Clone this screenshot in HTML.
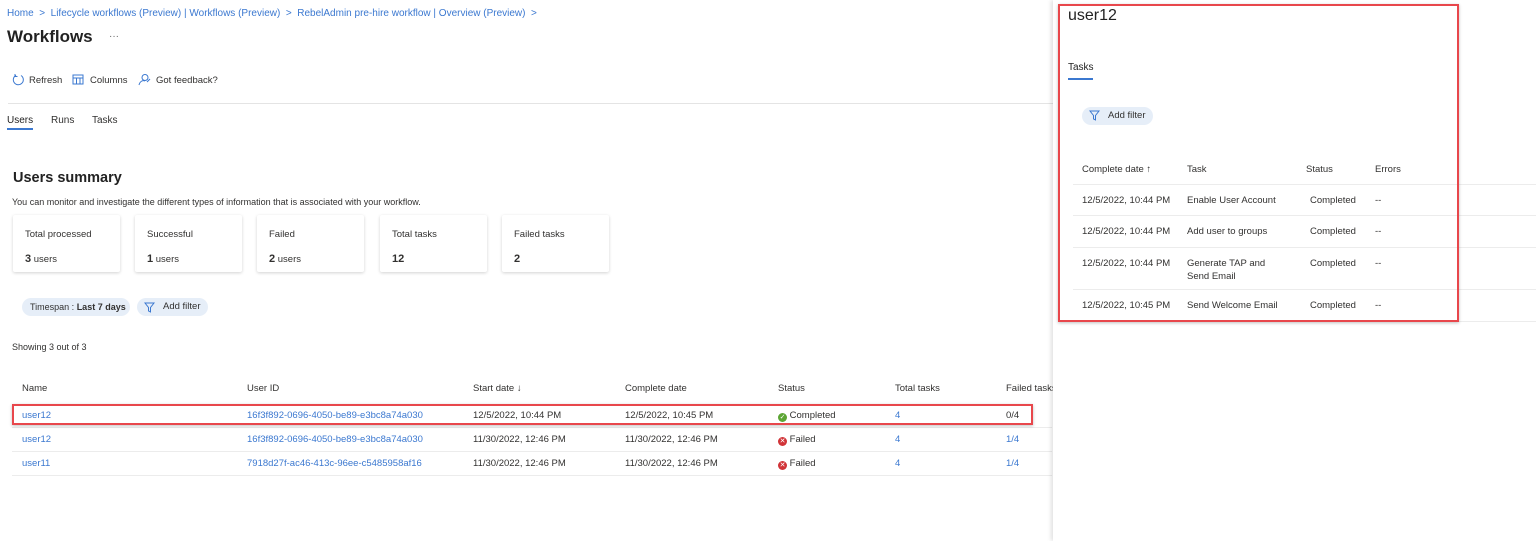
<!DOCTYPE html>
<html><head><style>
*{margin:0;padding:0;box-sizing:border-box}
body{width:1536px;height:541px;background:#fff;font-family:"Liberation Sans",sans-serif;color:#323130;position:relative;overflow:hidden;font-size:9.5px}
.a{position:absolute;white-space:nowrap}
.l{color:#3b78d0}
.card{position:absolute;top:215px;width:107px;height:57px;background:#fff;box-shadow:0 1px 3px rgba(0,0,0,.18);border-radius:2px}
.card .t{position:absolute;left:12px;top:14px;font-size:9.5px}
.card .v{position:absolute;left:12px;top:38px;font-size:9.5px}
.card .v b{font-size:11px}
.pill{position:absolute;height:18px;border-radius:9px;background:#e6eef8;font-size:9.5px;line-height:18px}
.hl{position:absolute;height:1px;background:#ececec}
</style></head><body>
<div class="a l" style="left:7px;top:8px;font-size:10px">Home &nbsp;&gt;&nbsp; Lifecycle workflows (Preview) | Workflows (Preview) &nbsp;&gt;&nbsp; RebelAdmin pre-hire workflow | Overview (Preview) &nbsp;&gt;</div>
<div class="a" style="left:7px;top:27px;font-size:17px;font-weight:bold;color:#222">Workflows</div>
<div class="a" style="left:109px;top:31px;font-size:10px;color:#666">···</div>
<svg class="a" style="left:12px;top:73px" width="13" height="13" viewBox="0 0 13 13"><path d="M9 2.5A5 5 0 1 1 4 2.3" fill="none" stroke="#3b78d0" stroke-width="1"/><path d="M3 1v2.5h2.5" fill="none" stroke="#3b78d0"/></svg>
<div class="a" style="left:29px;top:75px;font-size:9.5px">Refresh</div>
<svg class="a" style="left:72px;top:74px" width="13" height="12"><rect x="1" y="1" width="10" height="9" fill="none" stroke="#3b78d0"/><path d="M1 4h10M4.5 4v6M8 4v6" stroke="#3b78d0"/></svg>
<div class="a" style="left:90px;top:75px">Columns</div>
<svg class="a" style="left:138px;top:73px" width="13" height="13"><circle cx="7" cy="4.5" r="3" fill="none" stroke="#3b78d0"/><path d="M1 12c1-4 4-5 6-4M9 9l3-3" fill="none" stroke="#3b78d0"/></svg>
<div class="a" style="left:156px;top:75px">Got feedback?</div>
<div class="hl" style="left:8px;top:103px;width:1045px;background:#e4e4e4"></div>
<div class="a" style="left:7px;top:115px;font-size:10px;color:#222">Users</div>
<div class="a" style="left:7px;top:128px;width:26px;height:2px;background:#3b78d0"></div>
<div class="a" style="left:51px;top:115px;font-size:10px">Runs</div>
<div class="a" style="left:92px;top:115px;font-size:10px">Tasks</div>
<div class="a" style="left:13px;top:170px;font-size:14.5px;font-weight:bold;color:#222">Users summary</div>
<div class="a" style="left:12px;top:197px;font-size:9px">You can monitor and investigate the different types of information that is associated with your workflow.</div>
<div class="card" style="left:13px"><div class="t">Total processed</div><div class="v"><b>3</b> users</div></div>
<div class="card" style="left:135px"><div class="t">Successful</div><div class="v"><b>1</b> users</div></div>
<div class="card" style="left:257px"><div class="t">Failed</div><div class="v"><b>2</b> users</div></div>
<div class="card" style="left:380px"><div class="t">Total tasks</div><div class="v"><b>12</b></div></div>
<div class="card" style="left:502px"><div class="t">Failed tasks</div><div class="v"><b>2</b></div></div>
<div class="pill" style="left:22px;top:298px;width:108px;padding-left:8px;font-size:9px">Timespan : <b>Last 7 days</b></div>
<div class="pill" style="left:137px;top:298px;width:71px;padding-left:26px">Add filter</div>
<svg class="a" style="left:144px;top:302px" width="11" height="11"><path d="M1 1h9L6.5 5.5V10L4.5 9V5.5z" fill="none" stroke="#3b78d0"/></svg>
<div class="a" style="left:12px;top:342px;font-size:9px">Showing 3 out of 3</div>
<div class="a" style="left:22px;top:383px">Name</div>
<div class="a" style="left:247px;top:383px">User ID</div>
<div class="a" style="left:473px;top:383px">Start date ↓</div>
<div class="a" style="left:625px;top:383px">Complete date</div>
<div class="a" style="left:778px;top:383px">Status</div>
<div class="a" style="left:895px;top:383px">Total tasks</div>
<div class="a" style="left:1006px;top:383px">Failed tasks</div>
<div class="hl" style="left:12px;top:427px;width:1040px"></div>
<div class="hl" style="left:12px;top:451px;width:1040px"></div>
<div class="hl" style="left:12px;top:475px;width:1040px"></div>
<div class="a l" style="left:22px;top:410px">user12</div><div class="a l" style="left:247px;top:410px">16f3f892-0696-4050-be89-e3bc8a74a030</div><div class="a" style="left:473px;top:410px">12/5/2022, 10:44 PM</div><div class="a" style="left:625px;top:410px">12/5/2022, 10:45 PM</div><div class="a" style="left:778px;top:410px"><span style="display:inline-block;width:9px;height:9px;border-radius:50%;background:#5ca534;color:#fff;font-size:7px;text-align:center;line-height:9px;vertical-align:-1px">✓</span> Completed</div><div class="a l" style="left:895px;top:410px">4</div><div class="a" style="left:1006px;top:410px">0/4</div>
<div class="a l" style="left:22px;top:434px">user12</div><div class="a l" style="left:247px;top:434px">16f3f892-0696-4050-be89-e3bc8a74a030</div><div class="a" style="left:473px;top:434px">11/30/2022, 12:46 PM</div><div class="a" style="left:625px;top:434px">11/30/2022, 12:46 PM</div><div class="a" style="left:778px;top:434px"><span style="display:inline-block;width:9px;height:9px;border-radius:50%;background:#d13438;color:#fff;font-size:7px;text-align:center;line-height:9px;vertical-align:-1px">✕</span> Failed</div><div class="a l" style="left:895px;top:434px">4</div><div class="a l" style="left:1006px;top:434px">1/4</div>
<div class="a l" style="left:22px;top:458px">user11</div><div class="a l" style="left:247px;top:458px">7918d27f-ac46-413c-96ee-c5485958af16</div><div class="a" style="left:473px;top:458px">11/30/2022, 12:46 PM</div><div class="a" style="left:625px;top:458px">11/30/2022, 12:46 PM</div><div class="a" style="left:778px;top:458px"><span style="display:inline-block;width:9px;height:9px;border-radius:50%;background:#d13438;color:#fff;font-size:7px;text-align:center;line-height:9px;vertical-align:-1px">✕</span> Failed</div><div class="a l" style="left:895px;top:458px">4</div><div class="a l" style="left:1006px;top:458px">1/4</div>
<div class="a" style="left:12px;top:404px;width:1021px;height:21px;border:2px solid #e8474c;box-shadow:0 1px 3px rgba(0,0,0,.25)"></div>

<div class="a" style="left:1053px;top:0;width:483px;height:541px;background:#fff;box-shadow:-2px 0 4px rgba(0,0,0,.12)"></div>
<div class="a" style="left:1068px;top:7px;font-size:16px;color:#222">user12</div>
<div class="a" style="left:1068px;top:62px;font-size:10px;color:#222">Tasks</div>
<div class="a" style="left:1068px;top:78px;width:25px;height:2px;background:#3b78d0"></div>
<div class="pill" style="left:1082px;top:107px;width:71px;padding-left:26px">Add filter</div>
<svg class="a" style="left:1089px;top:110px" width="11" height="11"><path d="M1 1h9L6.5 5.5V10L4.5 9V5.5z" fill="none" stroke="#3b78d0"/></svg>
<div class="a" style="left:1082px;top:164px">Complete date ↑</div>
<div class="a" style="left:1187px;top:164px">Task</div>
<div class="a" style="left:1306px;top:164px">Status</div>
<div class="a" style="left:1375px;top:164px">Errors</div>
<div class="hl" style="left:1073px;top:184px;width:463px"></div>
<div class="hl" style="left:1073px;top:215px;width:463px"></div>
<div class="hl" style="left:1073px;top:247px;width:463px"></div>
<div class="hl" style="left:1073px;top:289px;width:463px"></div>
<div class="hl" style="left:1073px;top:321px;width:463px"></div>
<div class="a" style="left:1082px;top:195px">12/5/2022, 10:44 PM</div><div class="a" style="left:1187px;top:195px">Enable User Account</div><div class="a" style="left:1310px;top:195px">Completed</div><div class="a" style="left:1375px;top:195px">--</div>
<div class="a" style="left:1082px;top:226px">12/5/2022, 10:44 PM</div><div class="a" style="left:1187px;top:226px">Add user to groups</div><div class="a" style="left:1310px;top:226px">Completed</div><div class="a" style="left:1375px;top:226px">--</div>
<div class="a" style="left:1082px;top:258px">12/5/2022, 10:44 PM</div><div class="a" style="left:1187px;top:258px;line-height:12.5px">Generate TAP and<br>Send Email</div><div class="a" style="left:1310px;top:258px">Completed</div><div class="a" style="left:1375px;top:258px">--</div>
<div class="a" style="left:1082px;top:300px">12/5/2022, 10:45 PM</div><div class="a" style="left:1187px;top:300px">Send Welcome Email</div><div class="a" style="left:1310px;top:300px">Completed</div><div class="a" style="left:1375px;top:300px">--</div>
<div class="a" style="left:1058px;top:4px;width:401px;height:318px;border:2px solid #e8474c;box-shadow:0 1px 3px rgba(0,0,0,.25)"></div>
</body></html>
